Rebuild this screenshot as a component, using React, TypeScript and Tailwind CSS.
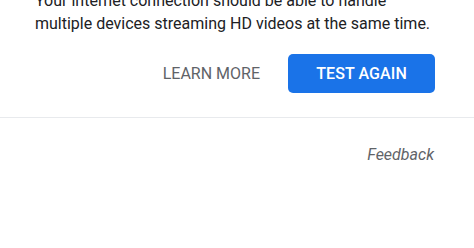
export default function App() {
  return (
    <div className="w-[474px] h-[248px] overflow-hidden bg-white" style={{ fontFamily: 'Roboto, "Noto Sans", sans-serif' }}>
      <div className="px-[35px] mt-[-11.5px]">
        <p className="text-[16px] leading-[23px] text-[#202124]">
          Your internet connection should be able to handle multiple devices streaming HD videos at the same time.
        </p>
      </div>
      <div className="flex justify-end items-center gap-[8px] pr-[39px] mt-[19.5px]">
        <button className="h-[39px] px-[20px] text-[16px] text-[#5f6368] rounded">
          LEARN MORE
        </button>
        <button className="h-[39px] w-[147px] text-[16px] font-medium tracking-[0.1px] text-white bg-[#1a73e8] rounded-[5px]">
          TEST AGAIN
        </button>
      </div>
      <div className="mt-[24px] border-t border-[#e8eaed]" />
      <div className="flex justify-end pr-[40px] pt-[25px]">
        <span className="text-[16px] italic text-[#5f6368]">Feedback</span>
      </div>
    </div>
  );
}
